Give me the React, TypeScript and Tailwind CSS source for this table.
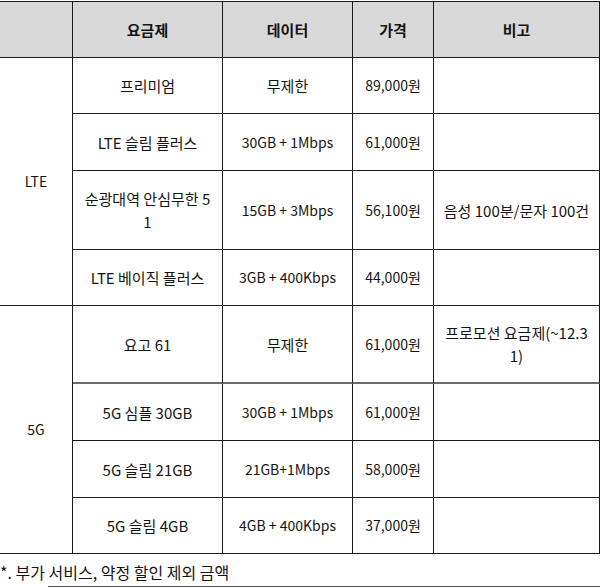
import React from 'react'

type Row = {
  plan: React.ReactNode
  data: string
  price: string
  note?: React.ReactNode
  h: string
  edge?: string
}

const lte: Row[] = [
  { plan: '프리미엄', data: '무제한', price: '89,000원', h: 'h-[56px]' },
  { plan: 'LTE 슬림 플러스', data: '30GB + 1Mbps', price: '61,000원', h: 'h-[57px]' },
  {
    plan: (
      <>
        순광대역 안심무한 5<br />1
      </>
    ),
    data: '15GB + 3Mbps',
    price: '56,100원',
    note: '음성 100분/문자 100건',
    h: 'h-[79px]',
  },
  { plan: 'LTE 베이직 플러스', data: '3GB + 400Kbps', price: '44,000원', h: 'h-[55px]' },
]

const fiveG: Row[] = [
  {
    plan: '요고 61',
    data: '무제한',
    price: '61,000원',
    note: (
      <>
        프로모션 요금제(~12.3<br />1)
      </>
    ),
    h: 'h-[78px]',
    edge: 'border-b-2 border-b-[#6b6b6b]',
  },
  { plan: '5G 심플 30GB', data: '30GB + 1Mbps', price: '61,000원', h: 'h-[57px]' },
  { plan: '5G 슬림 21GB', data: '21GB+1Mbps', price: '58,000원', h: 'h-[57px]' },
  { plan: '5G 슬림 4GB', data: '4GB + 400Kbps', price: '37,000원', h: 'h-[55px]' },
]

const cell = 'flex items-center justify-center text-center border-r border-b border-[#1a1a1a]'

// Korean-heavy cells read larger than the latin ones in the original
const korean = (s: string) => /^[가-힣]+$/.test(s)

function PlanRow({ r }: { r: Row }) {
  const edge = r.edge ?? ''
  return (
    <div className={`flex ${r.h}`}>
      <div className={`${cell} ${edge} w-[150px] text-[15px]`}>{r.plan}</div>
      <div className={`${cell} ${edge} w-[130px] ${korean(r.data) ? 'text-[15px]' : 'text-[14px]'}`}>{r.data}</div>
      <div className={`${cell} ${edge} w-[81px] text-[14px]`}>{r.price}</div>
      <div className={`${cell} ${edge} w-[166px] px-1 text-[15px]`}>{r.note}</div>
    </div>
  )
}

function Group({ label, rows }: { label: string; rows: Row[] }) {
  return (
    <div className="flex border-b border-[#1a1a1a]">
      <div className="flex w-[73px] items-center justify-center border-r border-[#1a1a1a]">{label}</div>
      <div className="flex flex-col [&>div:last-child>div]:border-b-0">
        {rows.map((r, i) => (
          <PlanRow key={i} r={r} />
        ))}
      </div>
    </div>
  )
}

export default function App() {
  return (
    <div
      className="w-[600px] h-[587px] overflow-hidden bg-white pt-px text-[14px] leading-[23px] text-[#141414]"
      style={{ fontFamily: '"Noto Sans CJK KR", "Noto Sans", sans-serif' }}
    >
      <div className="border-t border-[#1a1a1a]">
        <div className="flex h-[56px] bg-[#d9d9d9] text-[15px] font-bold border-b border-[#1a1a1a]">
          <div className="w-[73px] border-r border-[#1a1a1a]" />
          <div className="flex w-[150px] items-center justify-center border-r border-[#1a1a1a]">요금제</div>
          <div className="flex w-[130px] items-center justify-center border-r border-[#1a1a1a]">데이터</div>
          <div className="flex w-[81px] items-center justify-center border-r border-[#1a1a1a]">가격</div>
          <div className="flex w-[166px] items-center justify-center border-r border-[#1a1a1a]">비고</div>
        </div>
        <Group label="LTE" rows={lte} />
        <Group label="5G" rows={fiveG} />
      </div>
      <div className="flex h-[33px] flex-col justify-end">
        <p className="text-[16px] leading-[20px]">*. 부가 서비스, 약정 할인 제외 금액</p>
        <div className="ml-[48px] mt-[4px] h-px bg-[#555]" />
      </div>
    </div>
  )
}
